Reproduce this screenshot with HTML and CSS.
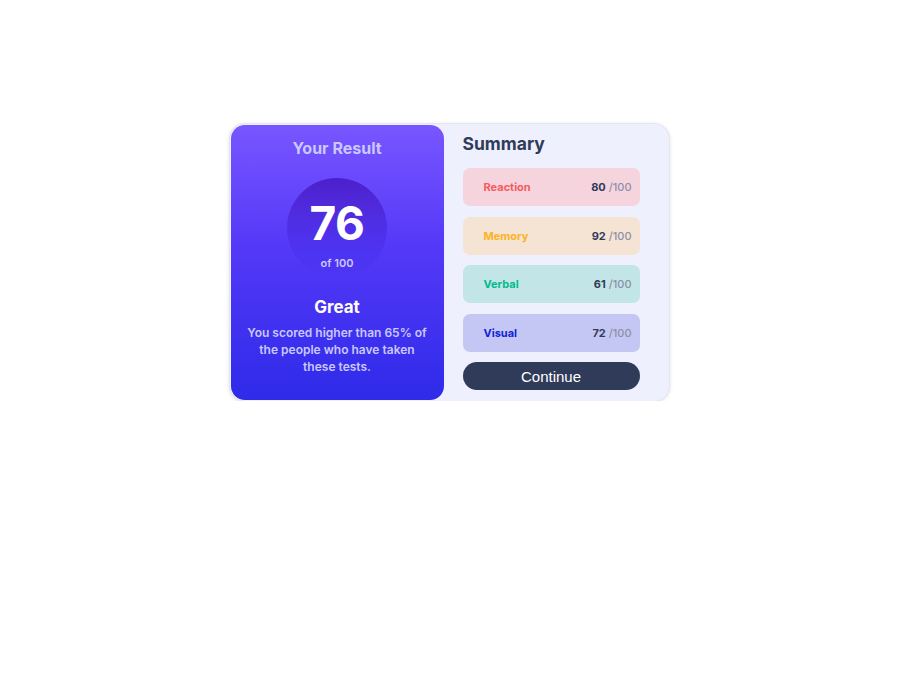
FILE: index.html
```html
<!DOCTYPE html>
<html>
<head>
<meta charset="utf-8">
<link rel="stylesheet" href="styles.css">
</head>
<body>
<div class="page">
  <div class="card">
    <section class="result">
      <h2 class="result-title">Your Result</h2>
      <div class="circle">
        <span class="score">76</span>
        <span class="of">of 100</span>
      </div>
      <h3 class="grade">Great</h3>
      <p class="desc">You scored higher than 65% of the people who have taken these tests.</p>
    </section>
    <section class="summary">
      <h2 class="summary-title">Summary</h2>
      <ul class="rows">
        <li class="row reaction"><span class="label">Reaction</span><span class="val"><b>80</b> /100</span></li>
        <li class="row memory"><span class="label">Memory</span><span class="val"><b>92</b> /100</span></li>
        <li class="row verbal"><span class="label">Verbal</span><span class="val"><b>61</b> /100</span></li>
        <li class="row visual"><span class="label">Visual</span><span class="val"><b>72</b> /100</span></li>
      </ul>
      <button class="continue">Continue</button>
    </section>
  </div>
</div>
</body>
</html>
```
FILE: styles.css
```css
html, body { margin: 0; padding: 0; background: #fff; }
body { font-family: Inter, "Noto Sans", sans-serif; }
.page { display: flex; justify-content: center; padding: 124px 2px 0 0; }
.card {
  display: flex;
  width: 439px;
  height: 277px;
  box-sizing: border-box;
  padding: 1px 0 1px 1px;
  background: #eff0fd;
  border-radius: 15px;
  box-shadow: 0 0 0 1px #e4e5ef, 0 1px 5px rgba(0,0,0,0.16);
}
.result {
  width: 213px;
  height: 275px;
  box-sizing: border-box;
  border-radius: 14px;
  background: linear-gradient(180deg, #7856ff 0%, #5438f7 45%, #2e2be9 100%);
  display: flex;
  flex-direction: column;
  align-items: center;
  text-align: center;
}
.result-title {
  margin: 13px 0 0;
  font-size: 16px;
  line-height: 20px;
  font-weight: 700;
  color: #cac8ff;
}
.circle {
  margin-top: 20px;
  width: 100px;
  height: 100px;
  border-radius: 50%;
  background: linear-gradient(180deg, #4c1fcb 0%, rgba(62, 40, 230, 0.35) 70%, rgba(50, 40, 240, 0) 100%);
  display: flex;
  flex-direction: column;
  align-items: center;
}
.score {
  margin-top: 20px;
  font-size: 46px;
  line-height: 50px;
  font-weight: 700;
  color: #fff;
  letter-spacing: -0.5px;
}
.of {
  margin-top: 8px;
  font-size: 11px;
  line-height: 14px;
  font-weight: 600;
  color: #cbc9ff;
}
.grade {
  margin: 18px 0 0;
  font-size: 17px;
  line-height: 22px;
  font-weight: 700;
  color: #fff;
}
.desc {
  margin: 6px 0 0;
  width: 185px;
  font-size: 12px;
  line-height: 17px;
  font-weight: 600;
  color: #c9c8ff;
}
.summary {
  flex: 1;
  padding: 8px 29px 0 19px;
  display: flex;
  flex-direction: column;
}
.summary-title {
  margin: 0;
  font-size: 17.5px;
  line-height: 22px;
  font-weight: 700;
  color: #303b5a;
}
.rows {
  list-style: none;
  margin: 13px 0 0;
  padding: 0;
  display: flex;
  flex-direction: column;
  gap: 10.5px;
}
.row {
  height: 38px;
  border-radius: 7px;
  display: flex;
  align-items: center;
  justify-content: space-between;
  padding: 0 8px 0 21px;
  font-size: 11px;
  font-weight: 700;
}
.val { color: #8d8fa6; font-weight: 500; }
.val b { color: #303b5a; font-weight: 700; }
.reaction { background: #f6d4de; }
.reaction .label { color: #f55b5d; }
.memory { background: #f5e3d4; }
.memory .label { color: #ffb21e; }
.verbal { background: #c2e6e7; }
.verbal .label { color: #00bb8f; }
.visual { background: #c4c7f4; }
.visual .label { color: #1125d4; }
.continue {
  margin-top: 10.5px;
  height: 28px;
  border: none;
  border-radius: 14px;
  background: #303b59;
  color: #fff;
  font-family: "Liberation Sans", Arial, sans-serif;
  font-size: 15px;
  padding: 0;
}
```
